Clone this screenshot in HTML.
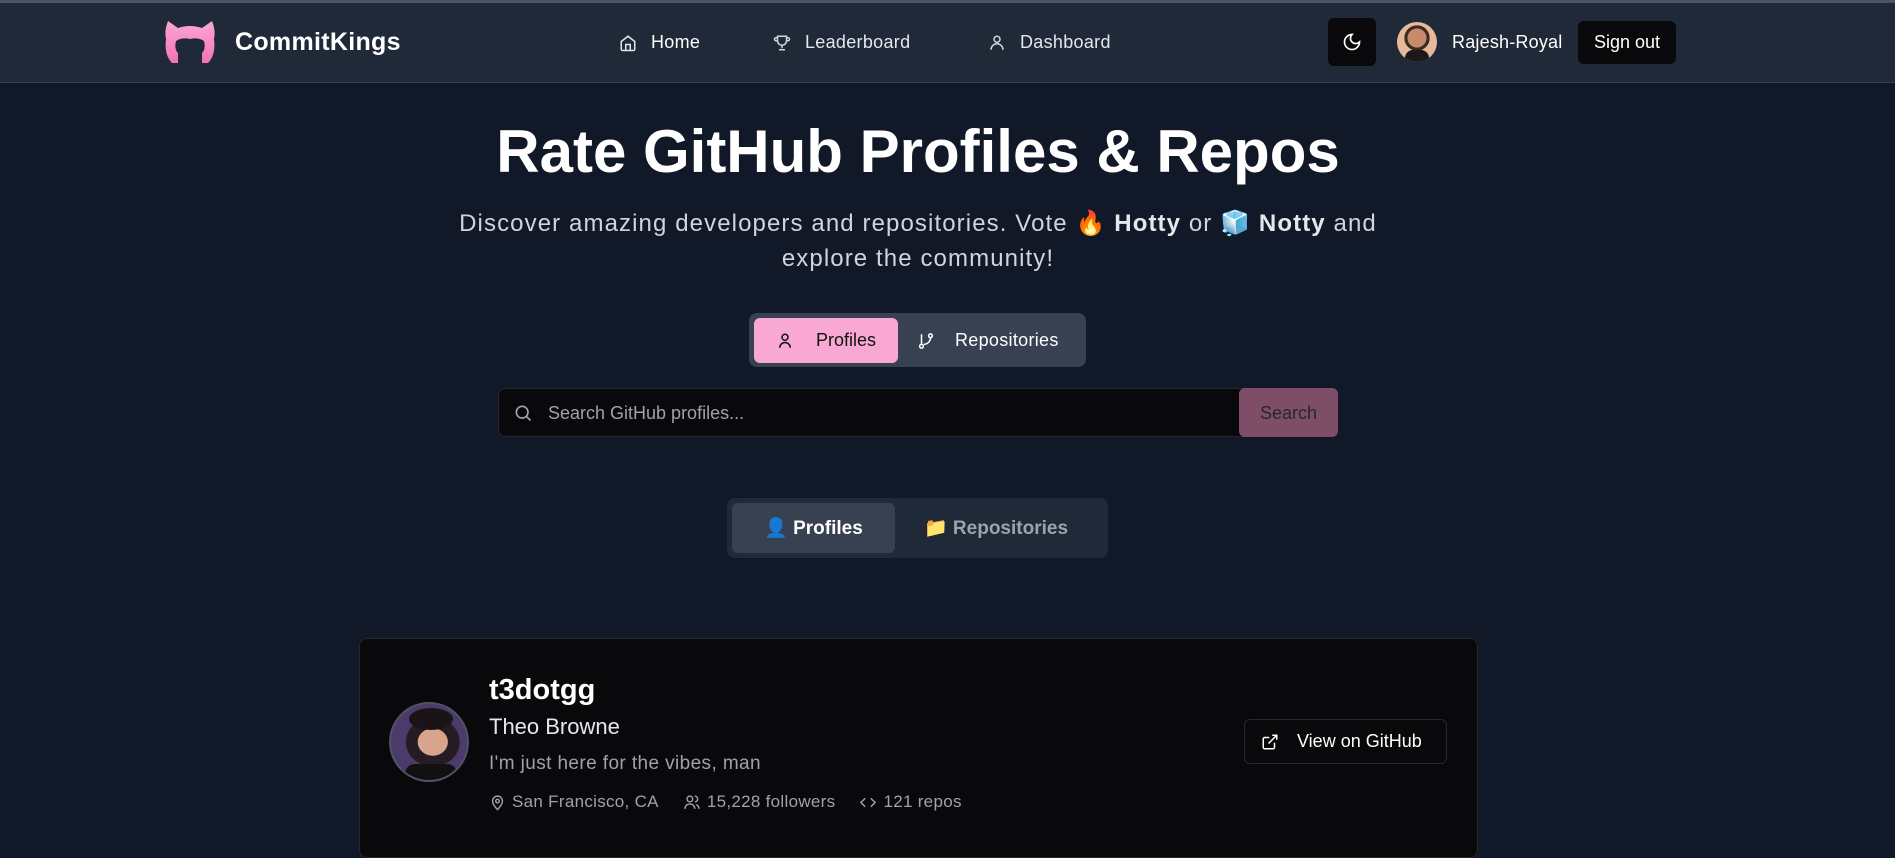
<!DOCTYPE html>
<html><head><meta charset="utf-8">
<style>
*{box-sizing:border-box;margin:0;padding:0}
body{width:1895px;height:845px;overflow:hidden;background:#111827;font-family:"Liberation Sans","Noto Sans CJK SC",sans-serif;color:#f9fafb;position:relative}
.a{position:absolute}
.nav{left:0;top:0;width:1895px;height:83px;background:#1f2937;border-top:3px solid #4b5563;border-bottom:1px solid #374151}
.ni{font-size:18px;color:#e5e7eb;display:flex;align-items:center;gap:14px;top:32px;letter-spacing:0.3px}
svg{display:block}
.c{left:0;width:1836px;text-align:center}
</style></head><body>
<div class="a nav"></div>
<svg class="a" style="left:162px;top:17px" width="56" height="50" viewBox="0 0 56 50"><defs><linearGradient id="g" x1="0" y1="0" x2="0" y2="1"><stop offset="0" stop-color="#f9a8d4"/><stop offset="1" stop-color="#f472b6"/></linearGradient></defs><path d="M6 4 L16 11 Q28 7 40 11 L50 4 Q54 14 52 22 Q54 38 46 46 L40 46 L40 36 Q44 32 42 24 Q36 20 28 22 Q20 20 14 24 Q12 32 16 36 L16 46 L10 46 Q2 38 4 22 Q2 14 6 4 Z" fill="url(#g)"/></svg>
<div class="a" style="left:235px;top:28px;font-size:25px;font-weight:bold;color:#fff;letter-spacing:0.3px">CommitKings</div>
<div class="a ni" style="left:619px"><svg width="18" height="18" viewBox="0 0 24 24" fill="none" stroke="#e5e7eb" stroke-width="2"><path d="M3 10l9-7 9 7v10a2 2 0 0 1-2 2H5a2 2 0 0 1-2-2z"/><path d="M9 22v-8h6v8"/></svg><span style="color:#fff">Home</span></div>
<div class="a ni" style="left:773px"><svg width="18" height="18" viewBox="0 0 24 24" fill="none" stroke="#d1d5db" stroke-width="2"><path d="M6 9H4a2 2 0 0 1 0-4h2M18 9h2a2 2 0 0 0 0-4h-2M6 3h12v6a6 6 0 0 1-12 0z"/><path d="M12 15v4M8 21h8"/></svg><span>Leaderboard</span></div>
<div class="a ni" style="left:988px"><svg width="18" height="18" viewBox="0 0 24 24" fill="none" stroke="#d1d5db" stroke-width="2"><circle cx="12" cy="7" r="4"/><path d="M4 21a8 8 0 0 1 16 0"/></svg><span>Dashboard</span></div>
<div class="a" style="left:1328px;top:18px;width:48px;height:48px;background:#09090b;border-radius:6px"><svg style="margin:14px" width="20" height="20" viewBox="0 0 24 24" fill="none" stroke="#fff" stroke-width="2"><path d="M12 3a6 6 0 0 0 9 9 9 9 0 1 1-9-9z"/></svg></div>
<div class="a" style="left:1397px;top:22px;width:40px;height:40px;border-radius:50%;background:radial-gradient(circle at 50% 40%,#c98a6a 0 30%,#3a2a22 31% 40%,#e8b89a 41%);overflow:hidden"><div style="position:absolute;left:8px;top:28px;width:24px;height:14px;background:#1a1a1a;border-radius:8px 8px 0 0"></div></div>
<div class="a" style="left:1452px;top:32px;font-size:18px;color:#fff;letter-spacing:0.2px">Rajesh-Royal</div>
<div class="a" style="left:1578px;top:21px;width:98px;height:43px;background:#09090b;border-radius:6px;font-size:18px;color:#fff;text-align:center;line-height:43px">Sign out</div>

<div class="a c" style="top:117px;font-size:60px;font-weight:bold;color:#fff">Rate GitHub Profiles &amp; Repos</div>
<div class="a c" style="top:206px;font-size:24px;line-height:35px;color:#d1d5db;letter-spacing:1.1px">Discover amazing developers and repositories. Vote 🔥 <b style="color:#e5e7eb">Hotty</b> or 🧊 <b style="color:#e5e7eb">Notty</b> and<br>explore the community!</div>

<div class="a" style="left:749px;top:313px;width:337px;height:54px;background:#374151;border-radius:8px"></div>
<div class="a" style="left:754px;top:318px;width:144px;height:45px;background:#f9a8d4;border-radius:6px;display:flex;align-items:center;gap:22px;padding-left:22px;font-size:18px;color:#111"><svg width="18" height="18" viewBox="0 0 24 24" fill="none" stroke="#111" stroke-width="2"><circle cx="12" cy="7" r="4"/><path d="M5 21a7 7 0 0 1 14 0"/></svg>Profiles</div>
<div class="a" style="left:917px;top:330px;display:flex;align-items:center;gap:20px;font-size:18px;color:#fff;letter-spacing:0.3px"><svg width="18" height="20" viewBox="0 0 24 24" fill="none" stroke="#fff" stroke-width="2"><circle cx="6" cy="19" r="2.5"/><circle cx="18" cy="5" r="2.5"/><path d="M6 3v13.5M18 7.5a9 9 0 0 1-9 9"/></svg>Repositories</div>

<div class="a" style="left:498px;top:388px;width:760px;height:49px;background:#09090b;border:1px solid #27272a;border-radius:7px"></div>
<svg class="a" style="left:513px;top:403px" width="20" height="20" viewBox="0 0 24 24" fill="none" stroke="#a1a1aa" stroke-width="2"><circle cx="11" cy="11" r="7"/><path d="M16 16l5 5"/></svg>
<div class="a" style="left:548px;top:403px;font-size:18px;color:#a1a1aa">Search GitHub profiles...</div>
<div class="a" style="left:1239px;top:388px;width:99px;height:49px;background:#7e4d68;border-radius:6px;font-size:18px;color:#27272a;text-align:center;line-height:50px">Search</div>

<div class="a" style="left:727px;top:498px;width:381px;height:60px;background:#1f2937;border-radius:8px"></div>
<div class="a" style="left:732px;top:503px;width:163px;height:50px;background:#374151;border-radius:6px;font-size:19px;font-weight:bold;color:#fff;text-align:center;line-height:52px">👤 Profiles</div>
<div class="a" style="left:924px;top:503px;height:50px;font-size:19px;font-weight:bold;color:#9ca3af;line-height:52px">📁 Repositories</div>

<div class="a" style="left:359px;top:638px;width:1119px;height:220px;background:#09090b;border:1px solid #27272a;border-radius:8px"></div>
<div class="a" style="left:389px;top:702px;width:80px;height:80px;border-radius:50%;border:2px solid #4b5563;background:radial-gradient(ellipse at 55% 50%,#d8a48c 0 25%,#241c22 26% 45%,#4b3a6a 46%);overflow:hidden"><div style="position:absolute;left:18px;top:4px;width:44px;height:22px;background:#1a1418;border-radius:50%"></div><div style="position:absolute;left:14px;top:60px;width:52px;height:20px;background:#111;border-radius:10px 10px 0 0"></div></div>
<div class="a" style="left:489px;top:674px;font-size:29px;font-weight:bold;color:#fff">t3dotgg</div>
<div class="a" style="left:489px;top:714px;font-size:22px;color:#e5e7eb">Theo Browne</div>
<div class="a" style="left:489px;top:753px;font-size:19px;color:#a1a1aa;letter-spacing:0.4px">I'm just here for the vibes, man</div>
<div class="a" style="left:489px;top:792px;font-size:17px;color:#a1a1aa;display:flex;align-items:center;gap:6px;letter-spacing:0.3px">
<svg width="17" height="17" viewBox="0 0 24 24" fill="none" stroke="#a1a1aa" stroke-width="2"><path d="M12 22s7-7 7-12a7 7 0 0 0-14 0c0 5 7 12 7 12z"/><circle cx="12" cy="10" r="2.5"/></svg>San Francisco, CA
<svg style="margin-left:18px" width="18" height="17" viewBox="0 0 24 24" fill="none" stroke="#a1a1aa" stroke-width="2"><circle cx="9" cy="7" r="4"/><path d="M2 21a7 7 0 0 1 14 0M16 3a4 4 0 0 1 0 8M22 21a7 7 0 0 0-4-6"/></svg>15,228 followers
<svg style="margin-left:18px" width="18" height="17" viewBox="0 0 24 24" fill="none" stroke="#a1a1aa" stroke-width="2"><path d="M8 6l-6 6 6 6M16 6l6 6-6 6"/></svg>121 repos</div>
<div class="a" style="left:1244px;top:719px;width:203px;height:45px;border:1px solid #27272a;border-radius:6px;background:#09090b;display:flex;align-items:center;gap:18px;padding-left:16px;font-size:18px;color:#fff"><svg width="18" height="18" viewBox="0 0 24 24" fill="none" stroke="#fff" stroke-width="2"><path d="M15 3h6v6M10 14L21 3M18 13v6a2 2 0 0 1-2 2H5a2 2 0 0 1-2-2V8a2 2 0 0 1 2-2h6"/></svg>View on GitHub</div>
</body></html>
